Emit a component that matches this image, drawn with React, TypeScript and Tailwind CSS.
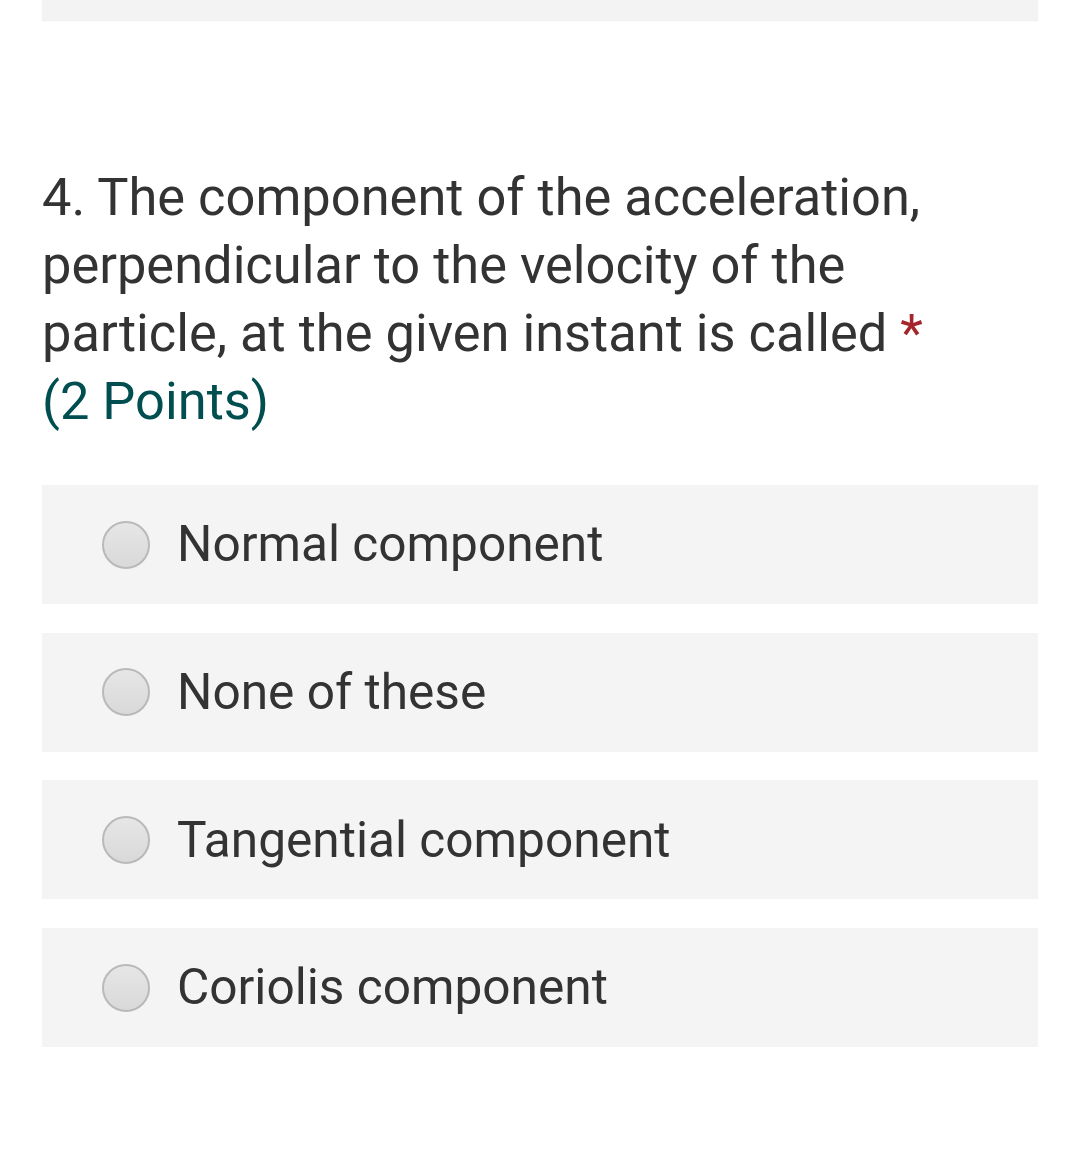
const options = ["Normal component", "None of these", "Tangential component", "Coriolis component"]

const Radio = () => (
    <span className="w-[48px] h-[48px] rounded-full border-2 border-[#b9b9b9] bg-gradient-to-b from-[#e6e6e6] to-[#d9d9d9] shrink-0" />
)

export default function App() {
    return (
        <div className="min-h-screen bg-white px-[42px] text-[#333333]" style={{ fontFamily: "Roboto, 'Noto Sans', sans-serif" }}>
            <div className="h-[20px] bg-[#f3f3f3] shadow-[0_1px_1px_rgba(0,0,0,0.06)]" />
            <div className="mt-[143px] text-[52.4px] leading-[68px] max-w-[940px]">
                <p>
                    4. The component of the acceleration, perpendicular to the velocity of the particle, at the given instant is called <span className="text-[#a4262c]">*</span>
                </p>
                <p className="text-[#004e4f]">(2 Points)</p>
            </div>
            <div className="mt-[50px] flex flex-col gap-[28.7px]">
                {options.map((o) => (
                    <div key={o} className="h-[119px] bg-[#f4f4f4] flex items-center pl-[60px] gap-[27px]">
                        <Radio />
                        <span className="text-[49.6px]">{o}</span>
                    </div>
                ))}
            </div>
        </div>
    )
}
